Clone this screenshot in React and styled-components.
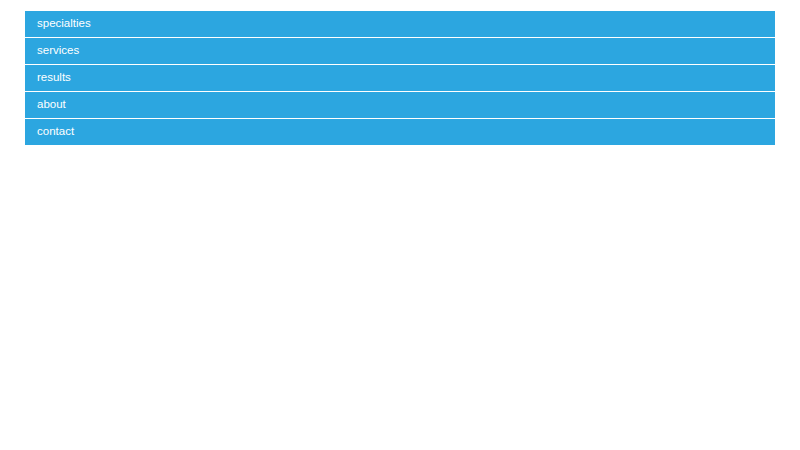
import React from 'react';
import styled, { createGlobalStyle } from 'styled-components';

const GlobalStyle = createGlobalStyle`
  body {
    margin: 0;
    background: #fff;
    font-family: "Liberation Sans", Arial, sans-serif;
  }
`;

const Nav = styled('ul')`
  list-style: none;
  margin: 11px 25px 0;
  padding: 0;
  display: flex;
  flex-direction: column;
  gap: 1px;
`;

const Item = styled('li')`
  height: 26px;
  box-sizing: border-box;
  display: flex;
  align-items: center;
  padding: 0 12px 2px;
  background: #2ca6e0;
  color: #fff;
  font-size: 11.5px;
  cursor: pointer;
`;

const links = ['specialties', 'services', 'results', 'about', 'contact'];

const App = () => (
  <>
    <GlobalStyle />
    <Nav>
      {links.map(link => (
        <Item key={link}>{link}</Item>
      ))}
    </Nav>
  </>
);

export default App;
